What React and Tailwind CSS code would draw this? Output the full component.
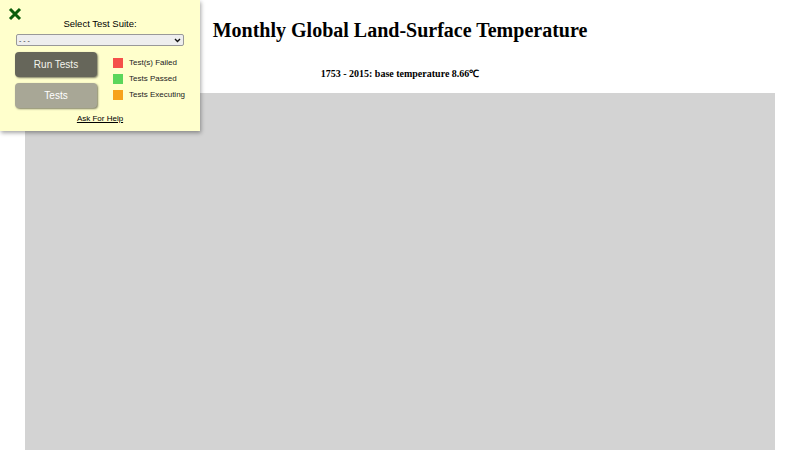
import React from "react";

const Legend = ({ color, label }) => (
  <div className="flex items-center gap-[6px] h-[16px]">
    <span className={`w-[10px] h-[10px] ${color}`} />
    <span className="text-[8px] text-[#222]">{label}</span>
  </div>
);

const TestPanel = () => (
  <div className="absolute top-0 left-0 w-[200px] h-[131px] bg-[#ffffcc] shadow-[1px_2px_4px_rgba(0,0,0,0.35)] font-['Liberation_Sans',sans-serif]">
    {/* close icon */}
    <svg className="absolute left-[8px] top-[7px]" width="14" height="14" viewBox="0 0 14 14">
      <path d="M2 2 L12 12 M12 2 L2 12" stroke="#0b5e0b" strokeWidth="3" strokeLinecap="butt" />
    </svg>
    <div className="pt-[17px] text-center text-[9.5px] text-black leading-[13px]">Select Test Suite:</div>
    <div className="mx-[16px] mt-[4px] h-[12px] bg-[#eeeeee] border border-[#999] rounded-[2px] flex items-center justify-between px-[2px]">
      <span className="text-[7px] leading-none text-[#333]">- - -</span>
      <svg width="7" height="5" viewBox="0 0 7 5">
        <path d="M1 1 L3.5 3.5 L6 1" stroke="#111" strokeWidth="1.4" fill="none" />
      </svg>
    </div>
    <div className="flex mt-[6px] ml-[15px]">
      <div className="flex flex-col gap-[6px]">
        <div className="w-[82px] h-[25px] rounded-[4px] bg-[#66665a] shadow-[1px_1px_2px_rgba(0,0,0,0.5)] flex items-center justify-center text-[10px] text-[#f4f4ec]">
          Run Tests
        </div>
        <div className="w-[82px] h-[25px] rounded-[4px] bg-[#a8a796] shadow-[1px_1px_2px_rgba(0,0,0,0.5)] flex items-center justify-center text-[10px] text-white">
          Tests
        </div>
      </div>
      <div className="ml-[16px] mt-[3px] flex flex-col">
        <Legend color="bg-[#f5504a]" label="Test(s) Failed" />
        <Legend color="bg-[#5bd65b]" label="Tests Passed" />
        <Legend color="bg-[#f7a21b]" label="Tests Executing" />
      </div>
    </div>
    <div className="text-center mt-[5px] text-[8px] underline text-black">Ask For Help</div>
  </div>
);

export default function App() {
  return (
    <div className="relative w-[800px] h-[450px] overflow-hidden bg-white font-['Liberation_Serif',serif]">
      <div className="flex flex-col items-center">
        <h1 className="mt-[18px] text-[20px] font-bold leading-[24px] text-black">
          Monthly Global Land-Surface Temperature
        </h1>
        <p className="mt-[26px] text-[10px] font-bold leading-[12px] text-black">
          1753 - 2015: base temperature 8.66℃
        </p>
        <div className="mt-[13px] w-[750px] h-[400px] bg-[#d3d3d3]" />
      </div>
      <TestPanel />
    </div>
  );
}
